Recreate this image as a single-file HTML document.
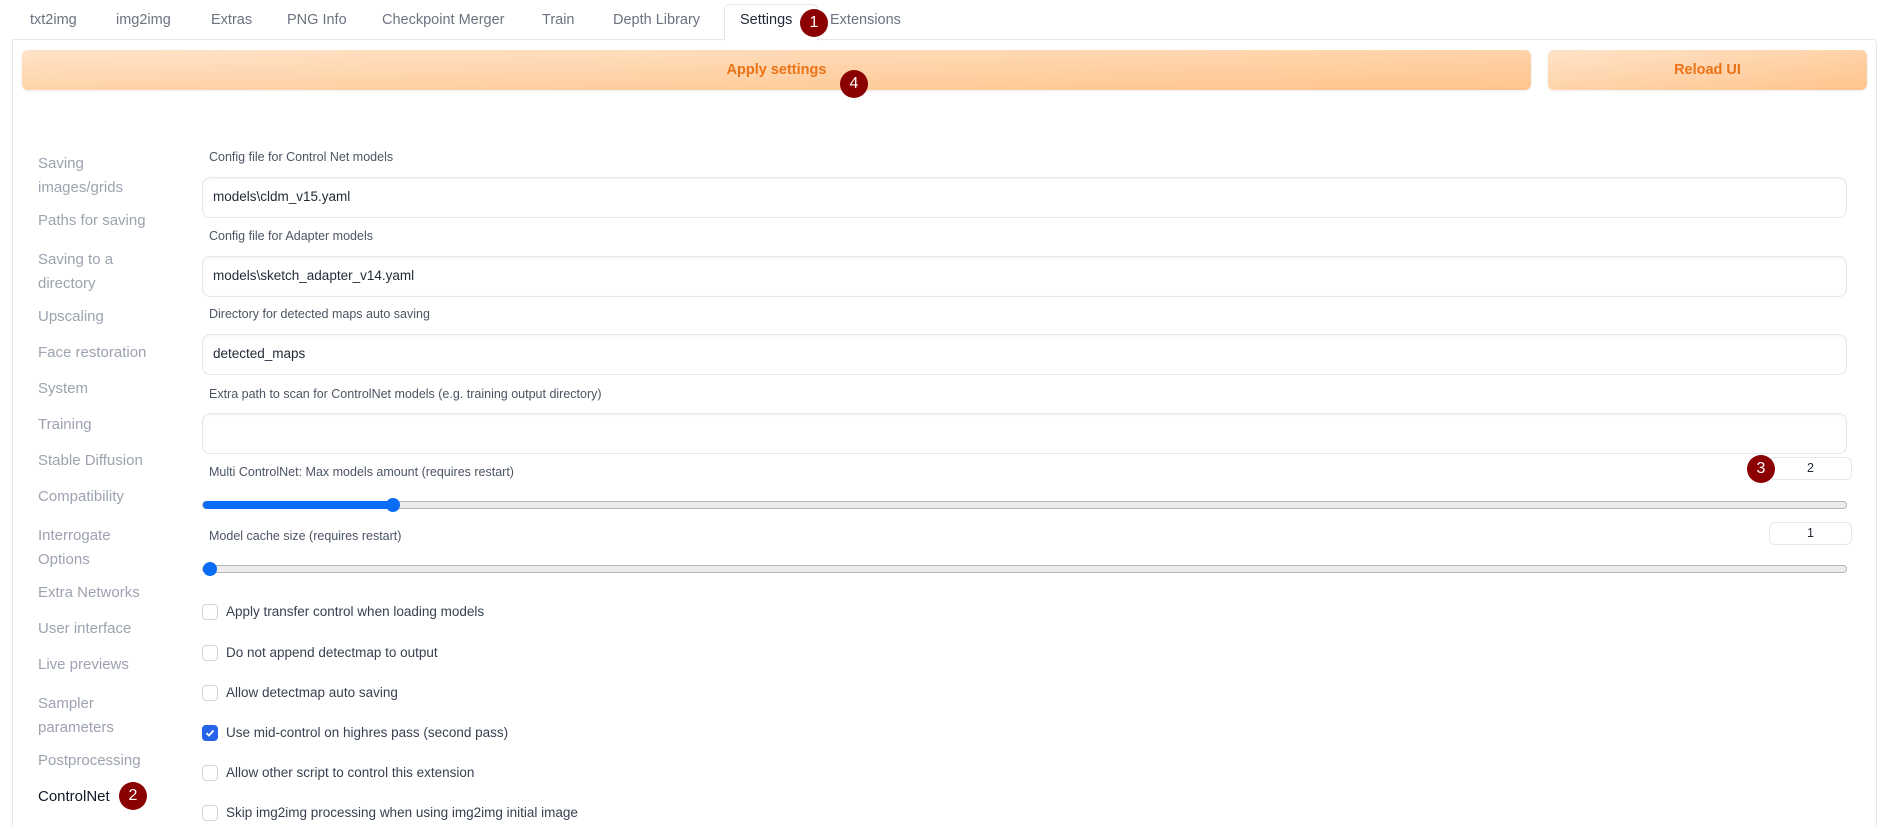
<!DOCTYPE html>
<html style="width:1883px;height:827px;overflow:hidden"><head><meta charset="utf-8"><style>
*{box-sizing:border-box;margin:0;padding:0}
body{width:1883px;height:827px;overflow:hidden;background:#fff;font-family:"Liberation Sans",sans-serif;position:relative;color:#374151}
.a{position:absolute;white-space:nowrap}
.tab{position:absolute;top:12px;font-size:14.5px;color:#6b7280}
.side{position:absolute;left:38px;font-size:15px;color:#9ca3af}
.lbl{position:absolute;left:209px;font-size:12.5px;color:#4b5563}
.inp{position:absolute;left:202px;width:1645px;height:41px;border:1px solid #e5e7eb;border-radius:8px;box-shadow:inset 0 1px 2px rgba(0,0,0,.05);font-size:13.5px;color:#1f2937;padding:11px 0 0 10px}
.badge{position:absolute;width:28px;height:28px;border-radius:50%;background:#8b0000;color:#fff;font-size:16px;text-align:center;line-height:28px}
.track{position:absolute;left:202px;width:1645px;height:8px;border:1px solid #b5b5b5;border-radius:4px;background:#ececec}
.fill{position:absolute;left:0;top:-1px;height:8px;background:#0b6cf5;border-radius:4px}
.thumb{position:absolute;width:14px;height:14px;border-radius:50%;background:#0b6cf5;top:-4px}
.num{position:absolute;left:1769px;width:83px;height:23px;border:1px solid #e5e7eb;border-radius:6px;font-size:12.5px;text-align:center;line-height:21px;color:#1f2937}
.cb{position:absolute;left:202px;width:16px;height:16px;border:1px solid #d1d5db;border-radius:4px;background:#fff}
.ct{position:absolute;left:226px;font-size:13.5px;color:#374151}
.btn{position:absolute;top:50px;height:40px;border-radius:6px;background:linear-gradient(to bottom right,#ffe3c8,#ffc48c);box-shadow:0 1px 2px rgba(0,0,0,.08);color:#ea7317;font-weight:bold;font-size:14.5px;text-align:center;line-height:40px}
</style></head><body>
<div class="tab" style="left:30px">txt2img</div>
<div class="tab" style="left:116px">img2img</div>
<div class="tab" style="left:211px">Extras</div>
<div class="tab" style="left:287px">PNG Info</div>
<div class="tab" style="left:382px">Checkpoint Merger</div>
<div class="tab" style="left:542px">Train</div>
<div class="tab" style="left:613px">Depth Library</div>
<div class="a" style="left:12px;top:39px;width:1865px;height:790px;border:1px solid #e5e7eb;border-bottom:none;border-radius:0 4px 0 0"></div>
<div class="a" style="left:724px;top:4px;width:94px;height:37px;border:1px solid #e5e7eb;border-bottom:none;border-radius:6px 6px 0 0;background:#fff"></div>
<div class="tab" style="left:740px;color:#1f2937">Settings</div>
<div class="tab" style="left:830px">Extensions</div>
<div class="badge" style="left:800px;top:9px">1</div>

<div class="btn" style="left:22px;width:1509px">Apply settings</div>
<div class="btn" style="left:1548px;width:319px">Reload UI</div>
<div class="badge" style="left:840px;top:70px">4</div>

<div class="side" style="top:152px;line-height:24px">Saving<br>images/grids</div>
<div class="side" style="top:212px">Paths for saving</div>
<div class="side" style="top:248px;line-height:24px">Saving to a<br>directory</div>
<div class="side" style="top:308px">Upscaling</div>
<div class="side" style="top:344px">Face restoration</div>
<div class="side" style="top:380px">System</div>
<div class="side" style="top:416px">Training</div>
<div class="side" style="top:452px">Stable Diffusion</div>
<div class="side" style="top:488px">Compatibility</div>
<div class="side" style="top:524px;line-height:24px">Interrogate<br>Options</div>
<div class="side" style="top:584px">Extra Networks</div>
<div class="side" style="top:620px">User interface</div>
<div class="side" style="top:656px">Live previews</div>
<div class="side" style="top:692px;line-height:24px">Sampler<br>parameters</div>
<div class="side" style="top:752px">Postprocessing</div>
<div class="side" style="top:788px;color:#111827">ControlNet</div>
<div class="badge" style="left:119px;top:782px">2</div>

<div class="lbl" style="top:150px">Config file for Control Net models</div>
<div class="inp" style="top:177px">models\cldm_v15.yaml</div>
<div class="lbl" style="top:229px">Config file for Adapter models</div>
<div class="inp" style="top:256px">models\sketch_adapter_v14.yaml</div>
<div class="lbl" style="top:307px">Directory for detected maps auto saving</div>
<div class="inp" style="top:334px">detected_maps</div>
<div class="lbl" style="top:387px">Extra path to scan for ControlNet models (e.g. training output directory)</div>
<div class="inp" style="top:413px"></div>
<div class="lbl" style="top:465px">Multi ControlNet: Max models amount (requires restart)</div>
<div class="num" style="top:457px">2</div>
<div class="badge" style="left:1747px;top:455px">3</div>
<div class="track" style="top:501px"><div class="fill" style="width:190px"></div><div class="thumb" style="left:183px"></div></div>
<div class="lbl" style="top:529px">Model cache size (requires restart)</div>
<div class="num" style="top:522px">1</div>
<div class="track" style="top:565px"><div class="thumb" style="left:0px"></div></div>

<div class="cb" style="top:604px"></div><div class="ct" style="top:604px">Apply transfer control when loading models</div>
<div class="cb" style="top:645px"></div><div class="ct" style="top:645px">Do not append detectmap to output</div>
<div class="cb" style="top:685px"></div><div class="ct" style="top:685px">Allow detectmap auto saving</div>
<div class="cb" style="top:725px;background:#2563eb;border-color:#2563eb"><svg width="14" height="14" viewBox="0 0 14 14" style="position:absolute;left:0;top:0"><path d="M3.5 7.2 L6 9.6 L10.5 4.4" fill="none" stroke="#fff" stroke-width="1.8"/></svg></div><div class="ct" style="top:725px">Use mid-control on highres pass (second pass)</div>
<div class="cb" style="top:765px"></div><div class="ct" style="top:765px">Allow other script to control this extension</div>
<div class="cb" style="top:805px"></div><div class="ct" style="top:805px">Skip img2img processing when using img2img initial image</div>
</body></html>
